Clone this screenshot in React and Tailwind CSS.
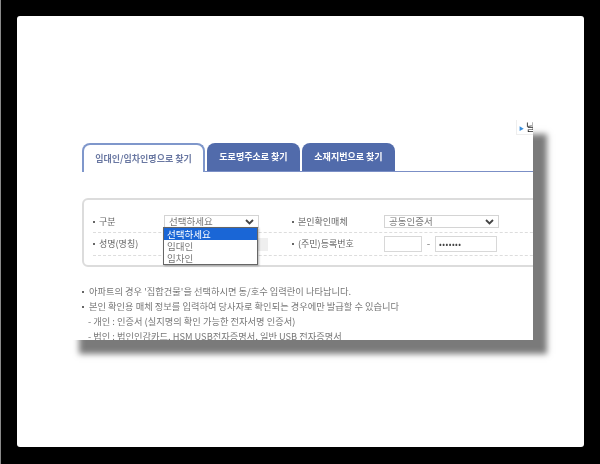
const Chevron = () => (
  <svg width="9" height="6" viewBox="0 0 9 6" className="shrink-0">
    <path d="M1 1l3.5 3.5L8 1" fill="none" stroke="#444" strokeWidth="1.8" />
  </svg>
);

const Label = ({ children, className = "" }) => (
  <div className={`flex items-center gap-[4px] text-[9px] text-[#666] ${className}`}>
    <span className="w-[2px] h-[2px] bg-[#666]" />
    {children}
  </div>
);

const Select = ({ value, className = "" }) => (
  <div
    className={`flex items-center justify-between h-[13px] pl-[4px] pr-[4px] bg-white border border-[#d4d4d4] text-[9.5px] leading-[11px] text-[#777] ${className}`}
  >
    {value}
    <Chevron />
  </div>
);

const notes = [
  { bullet: true, text: "아파트의 경우 '집합건물'을 선택하시면 동/호수 입력란이 나타납니다." },
  { bullet: true, text: "본인 확인용 매체 정보를 입력하여 당사자로 확인되는 경우에만 발급할 수 있습니다" },
  { bullet: false, text: "- 개인 : 인증서 (실지명의 확인 가능한 전자서명 인증서)" },
  { bullet: false, text: "- 법인 : 법인인감카드, HSM USB전자증명서, 일반 USB 전자증명서" },
];

export default function App() {
  return (
    <div
      className="w-[600px] h-[464px] overflow-hidden bg-black border-l border-[#8a8a8a] pl-[16px] pt-[16px]"
      style={{ fontFamily: '"Noto Sans CJK KR", "Noto Sans", sans-serif' }}
    >
      {/* white card */}
      <div className="w-[567px] h-[431px] bg-white rounded-[3px] pl-[48px] pt-[104px]">
        {/* pasted screenshot with drop shadow */}
        <div className="w-[468px] h-[220px] bg-white shadow-[14px_14px_6px_rgba(0,0,0,0.52)] overflow-hidden">
          <div className="blur-[0.6px]">
            {/* top link */}
            <div className="flex justify-end">
              <div className="flex items-center gap-[2px] w-[17px] h-[15px] pl-[2px] border-b border-l border-[#eeeeee] text-[10px] leading-none text-[#222]">
                <span className="text-[#3a8fdc] text-[5px]">▶</span>
                <span className="w-[9px] overflow-hidden">날</span>
              </div>
            </div>

            {/* tabs */}
            <div className="flex items-end h-[29px] mt-[8px] pl-[17px]">
              <div className="flex items-center justify-center w-[123px] h-[29px] bg-white border-2 border-b-0 border-[#7f97cb] rounded-t-[8px] text-[9px] font-bold text-[#6a78a2]">
                임대인/임차인명으로 찾기
              </div>
              <div className="flex items-end gap-[2px] flex-1 pl-[2px] border-b border-[#7b8fc6]">
                <div className="flex items-center justify-center w-[93px] h-[28px] bg-[#516bab] rounded-t-[8px] text-[9px] font-bold text-white">
                  도로명주소로 찾기
                </div>
                <div className="flex items-center justify-center w-[93px] h-[28px] bg-[#516bab] rounded-t-[8px] text-[9px] font-bold text-white">
                  소재지번으로 찾기
                </div>
              </div>
            </div>

            {/* search form */}
            <div className="relative w-[500px] h-[69px] mt-[26px] ml-[17px] pt-[11px] pl-[9px] border-2 border-[#dcdcdc] rounded-[6px]">
              <div className="flex items-center h-[22px] w-[480px] border-b border-dashed border-[#dddddd]">
                <Label className="w-[71px]">구분</Label>
                <Select value="선택하세요" className="w-[95px]" />
                <Label className="w-[92px] ml-[33px]">본인확인매체</Label>
                <Select value="공동인증서" className="w-[115px]" />
              </div>
              <div className="flex items-center h-[23px] w-[480px] border-b border-dashed border-[#dddddd]">
                <Label className="w-[71px]">성명(명칭)</Label>
                <div className="w-[104px] h-[13px] bg-[#efefef]" />
                <Label className="w-[92px] ml-[24px]">(주민)등록번호</Label>
                <div className="w-[38px] h-[16px] border border-[#d8d8d8]" />
                <span className="w-[13px] pb-[3px] text-center text-[10px] leading-none text-[#777]">-</span>
                <div className="flex items-center w-[62px] h-[16px] pl-[3px] border border-[#d8d8d8] text-[8px] tracking-[0.5px] text-[#444]">
                  •••••••
                </div>
              </div>

              {/* open dropdown list */}
              <div className="absolute left-[79px] top-[27px] w-[95px] h-[38px] bg-white border border-[#666] shadow-[1px_1px_2px_rgba(0,0,0,0.3)] text-[9.5px] leading-[12px] text-[#777]">
                <div className="pl-[3px] bg-[#1a66d6] text-white">선택하세요</div>
                <div className="pl-[3px]">임대인</div>
                <div className="pl-[3px]">임차인</div>
              </div>
            </div>

            {/* notes */}
            <div className="mt-[18px] ml-[17px] flex flex-col gap-[0.5px]">
              {notes.map((note, index) => (
                <div
                  key={index}
                  className={`flex items-center gap-[5px] h-[14.5px] whitespace-nowrap text-[9.25px] text-[#777] ${
                    note.bullet ? "" : "pl-[6px]"
                  }`}
                >
                  {note.bullet && <span className="w-[2px] h-[2px] bg-[#666]" />}
                  {note.text}
                </div>
              ))}
            </div>
          </div>
        </div>
      </div>
    </div>
  );
}
